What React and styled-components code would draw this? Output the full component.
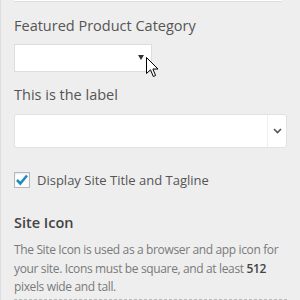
import React from 'react';
import styled, { createGlobalStyle } from 'styled-components';

const GlobalStyle = createGlobalStyle`
  body {
    margin: 0;
    background: #eeeeee;
    font-family: 'Open Sans', 'Noto Sans', sans-serif;
  }
`;

const Panel = styled.div`
  position: relative;
  width: 300px;
  height: 300px;
  overflow: hidden;
  box-sizing: border-box;
  background: #eeeeee;
  border-left: 1px solid #dddddd;
  padding: 0 13px;
`;

const PrevInput = styled.div`
  width: 268px;
  height: 1px;
  background: #ffffff;
  border-bottom: 1px solid #dddddd;
  margin-bottom: 12px;
`;

const Control = styled.div`
  margin-bottom: ${(p) => p.$gap || 0}px;
`;

const Title = styled.span`
  display: block;
  font-size: 14.5px;
  line-height: 24px;
  font-weight: ${(p) => (p.$bold ? 600 : 400)};
  color: ${(p) => (p.$bold ? '#444444' : '#555555')};
  margin-bottom: ${(p) => p.$gap || 6}px;
`;

const SmallSelect = styled.div`
  display: flex;
  align-items: center;
  justify-content: flex-end;
  box-sizing: border-box;
  width: 138px;
  height: 28px;
  padding-right: 7px;
  background: #ffffff;
  border: 1px solid #dddddd;
`;

const Triangle = styled.span`
  width: 0;
  height: 0;
  margin-top: -2px;
  border-left: 3px solid transparent;
  border-right: 3px solid transparent;
  border-top: 5px solid #333333;
`;

const WideSelect = styled.div`
  display: flex;
  box-sizing: border-box;
  width: 273px;
  height: 34px;
  background: #ffffff;
  border: 1px solid #e2e2e2;
  border-radius: 3px;
`;

const SelectValue = styled.div`
  flex: 1;
`;

const SelectArrow = styled.div`
  display: flex;
  align-items: center;
  justify-content: center;
  width: 18px;
  border-left: 1px solid #eeeeee;
`;

const CheckRow = styled.label`
  display: flex;
  align-items: center;
  gap: 7px;
  font-size: 13px;
  color: #555555;
  line-height: 16px;
`;

const CheckBox = styled.span`
  display: flex;
  align-items: center;
  justify-content: center;
  box-sizing: border-box;
  width: 16px;
  height: 16px;
  background: #ffffff;
  border: 1px solid #b4b9be;
  box-shadow: inset 0 1px 2px rgba(0, 0, 0, 0.1);
`;

const Description = styled.p`
  margin: 0;
  font-size: 12px;
  letter-spacing: -0.36px;
  line-height: 18.5px;
  color: #7a7a7a;
`;

const Strong = styled.strong`
  font-weight: 600;
  color: #444444;
`;

const Dashed = styled.div`
  margin-top: 2px;
  border-top: 1px dashed #bbbbbb;
`;

const Cursor = styled.svg`
  position: absolute;
  left: 145px;
  top: 57px;
`;

const App = () => (
  <>
    <GlobalStyle />
    <Panel>
      <PrevInput />

      <Control $gap={11}>
        <Title>Featured Product Category</Title>
        <SmallSelect>
          <Triangle />
        </SmallSelect>
      </Control>

      <Control $gap={24}>
        <Title $gap={7}>This is the label</Title>
        <WideSelect>
          <SelectValue />
          <SelectArrow>
            <svg width="9" height="6" viewBox="0 0 9 6">
              <path d="M1 1 L4.5 4.5 L8 1" fill="none" stroke="#555" strokeWidth="1.6" />
            </svg>
          </SelectArrow>
        </WideSelect>
      </Control>

      <Control $gap={23}>
        <CheckRow>
          <CheckBox>
            <svg width="14" height="14" viewBox="0 0 14 14">
              <path d="M2 7 L5.3 10.5 L12 2.5" fill="none" stroke="#1e8cbe" strokeWidth="2.6" />
            </svg>
          </CheckBox>
          Display Site Title and Tagline
        </CheckRow>
      </Control>

      <Control>
        <Title $bold>Site Icon</Title>
        <Description>
          The Site Icon is used as a browser and app icon for your site. Icons must be square, and at
          least <Strong>512</Strong> pixels wide and tall.
        </Description>
        <Dashed />
      </Control>

      <Cursor width="13" height="21" viewBox="0 0 13 21">
        <path
          d="M0.5 0.5 L0.5 16.5 L4.5 12.8 L7.3 19.5 L9.6 18.5 L6.9 12 L12 12 Z"
          fill="#ffffff"
          stroke="#000000"
          strokeWidth="1"
          strokeLinejoin="round"
        />
      </Cursor>
    </Panel>
  </>
);

export default App;
